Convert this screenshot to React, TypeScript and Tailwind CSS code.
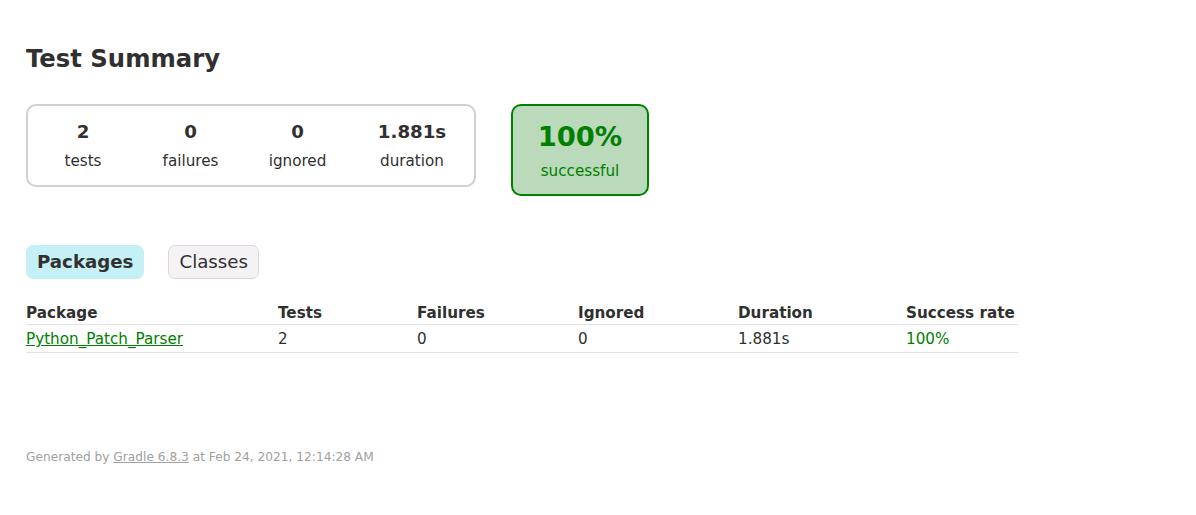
const COUNTERS = [
  { value: '2', label: 'tests', w: 'w-[108px]' },
  { value: '0', label: 'failures', w: 'w-[107px]' },
  { value: '0', label: 'ignored', w: 'w-[107px]' },
  { value: '1.881s', label: 'duration', w: 'w-[122px]' },
];

const COLS = [
  { label: 'Package', w: 'w-[252px]' },
  { label: 'Tests', w: 'w-[139px]' },
  { label: 'Failures', w: 'w-[161px]' },
  { label: 'Ignored', w: 'w-[160px]' },
  { label: 'Duration', w: 'w-[168px]' },
  { label: 'Success rate', w: 'w-[112px]' },
];

export default function App() {
  return (
    <div className="min-h-[515px] bg-white font-['DejaVu_Sans',sans-serif] text-[15.2px] text-[#303030]">
      <div className="px-[26px] pt-[44px]">
        <h1 className="text-[24.3px] font-bold leading-[30px]">Test Summary</h1>

        <div className="mt-[30px] flex items-start">
          <div className="flex rounded-[10px] border-2 border-[#d0d0d0] px-[1px]">
            {COUNTERS.map((c) => (
              <div key={c.label} className={`${c.w} pt-[15px] pb-[14px] text-center`}>
                <div className="mb-[9px] text-[18.2px] font-bold leading-[22px]">{c.value}</div>
                <div className="leading-[19px]">{c.label}</div>
              </div>
            ))}
          </div>
          <div className="ml-[35px] w-[138px] rounded-[10px] border-2 border-[#008000] bg-[#bbd9bb] pt-[14px] pb-[13px] text-center text-[#008000]">
            <div className="mb-[8px] text-[27.4px] font-bold leading-[34px]">100%</div>
            <div className="leading-[19px]">successful</div>
          </div>
        </div>

        <ul className="mt-[49px] flex">
          <li className="mr-[24px] rounded-[7px] border border-[#c5f0f5] bg-[#c5f0f5] px-[10px] py-[5px] text-[18.2px] font-bold leading-[22px]">
            Packages
          </li>
          <li className="rounded-[7px] border border-[#dcd6dc] bg-[#f5f2f5] px-[10px] py-[5px] text-[18.2px] leading-[22px]">
            Classes
          </li>
        </ul>

        <table className="mt-[25px] border-separate border-spacing-0 text-left">
          <thead>
            <tr>
              {COLS.map((c) => (
                <th key={c.label} className={`${c.w} whitespace-nowrap border-b border-[#e6e0e6] pb-[1px] font-bold leading-[19px]`}>
                  {c.label}
                </th>
              ))}
            </tr>
          </thead>
          <tbody>
            <tr>
              <td className="border-b border-[#e6e0e6] pt-[5px] pb-[3px] leading-[19px]">
                <a href="#" className="text-[#008000] underline">Python_Patch_Parser</a>
              </td>
              <td className="border-b border-[#e6e0e6] pt-[5px] pb-[3px] leading-[19px]">2</td>
              <td className="border-b border-[#e6e0e6] pt-[5px] pb-[3px] leading-[19px]">0</td>
              <td className="border-b border-[#e6e0e6] pt-[5px] pb-[3px] leading-[19px]">0</td>
              <td className="border-b border-[#e6e0e6] pt-[5px] pb-[3px] leading-[19px]">1.881s</td>
              <td className="border-b border-[#e6e0e6] pt-[5px] pb-[3px] leading-[19px] text-[#008000]">100%</td>
            </tr>
          </tbody>
        </table>

        <div className="mt-[97px] whitespace-nowrap text-[12.2px] leading-[15px] text-[#a0a0a0]">
          Generated by <a href="#" className="text-[#a0a0a0] underline">Gradle 6.8.3</a> at Feb 24, 2021, 12:14:28 AM
        </div>
      </div>
    </div>
  );
}
